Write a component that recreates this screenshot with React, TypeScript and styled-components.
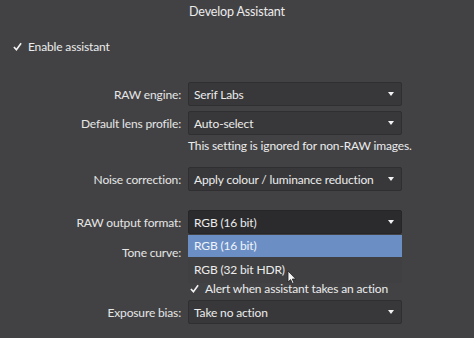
import styled, { createGlobalStyle } from 'styled-components'

const Global = createGlobalStyle`
  html, body {
    margin: 0;
    padding: 0;
    background: #424244;
  }
  body {
    font-family: Lato, 'Noto Sans', sans-serif;
    font-size: 12px;
    letter-spacing: -0.15px;
    color: #e6e6e6;
  }
`

const Panel = styled.div`
  position: relative;
  width: 474px;
  height: 338px;
  overflow: hidden;
  background: #424244;
`

const Title = styled.div`
  height: 24px;
  line-height: 24px;
  text-align: center;
  font-size: 12.5px;
  color: #ececec;
`

const Check = styled.div<{ $top: number; $left: number }>`
  display: flex;
  align-items: center;
  gap: 6px;
  height: 16px;
  margin-top: ${(p) => p.$top}px;
  padding-left: ${(p) => p.$left}px;
  color: #ececec;

  & svg {
    width: 9px;
    height: 9px;
  }
`

const Row = styled.div<{ $top: number }>`
  display: grid;
  grid-template-columns: 181px 214px;
  column-gap: 7px;
  align-items: center;
  margin-top: ${(p) => p.$top}px;
`

const Label = styled.div`
  text-align: right;
  white-space: nowrap;
`

const Select = styled.div<{ $open?: boolean }>`
  position: relative;
  display: flex;
  align-items: center;
  justify-content: space-between;
  box-sizing: border-box;
  height: 24px;
  padding: 0 5px 0 5px;
  border: 1px solid ${(p) => (p.$open ? '#262628' : '#2f2f31')};
  border-radius: 2px;
  background: ${(p) => (p.$open ? '#2b2b2d' : '#38383a')};
  color: #ececec;
  white-space: nowrap;

  &::after {
    content: '';
    width: 0;
    height: 0;
    margin-left: auto;
    margin-right: 2px;
    border-left: 3.5px solid transparent;
    border-right: 3.5px solid transparent;
    border-top: 4px solid #f2f2f2;
  }
`

const Note = styled.div`
  grid-column: 2;
  height: 17px;
  line-height: 17px;
  margin-top: 2px;
  white-space: nowrap;
  color: #ececec;
`

const Popup = styled.div`
  position: absolute;
  top: 24px;
  left: -1px;
  right: -1px;
  z-index: 2;
  background: #404042;
  padding-bottom: 2px;
`

const Option = styled.div<{ $active?: boolean }>`
  height: 22px;
  line-height: 22px;
  padding-left: 6px;
  margin-bottom: ${(p) => (p.$active ? 2 : 0)}px;
  background: ${(p) => (p.$active ? '#6b8fc5' : 'transparent')};
  color: ${(p) => (p.$active ? '#f0f4fa' : '#ececec')};
`

const Cursor = styled.svg`
  position: absolute;
  left: 287px;
  top: 270px;
  width: 10px;
  height: 15px;
  z-index: 3;
`

const Tick = () => (
  <svg viewBox="0 0 10 10">
    <path d="M1 5.5 L3.8 8.5 L9 1.5" fill="none" stroke="#f2f2f2" strokeWidth="1.8" />
  </svg>
)

export default function App() {
  return (
    <Panel>
      <Global />
      <Title>Develop Assistant</Title>
      <Check $top={14} $left={13}>
        <Tick />
        Enable assistant
      </Check>

      <Row $top={28}>
        <Label>RAW engine:</Label>
        <Select>Serif Labs</Select>
      </Row>
      <Row $top={5}>
        <Label>Default lens profile:</Label>
        <Select>Auto-select</Select>
        <Note>This setting is ignored for non-RAW images.</Note>
      </Row>
      <Row $top={13}>
        <Label>Noise correction:</Label>
        <Select>Apply colour / luminance reduction</Select>
      </Row>
      <Row $top={19}>
        <Label>RAW output format:</Label>
        <Select $open>
          RGB (16 bit)
          <Popup>
            <Option $active>RGB (16 bit)</Option>
            <Option>RGB (32 bit HDR)</Option>
          </Popup>
        </Select>
      </Row>
      <Row $top={6}>
        <Label>Tone curve:</Label>
        {/* covered by the open list above */}
        <Select />
      </Row>
      <Check $top={16} $left={190}>
        <Tick />
        Alert when assistant takes an action
      </Check>
      <Row $top={4}>
        <Label>Exposure bias:</Label>
        <Select>Take no action</Select>
      </Row>

      <Cursor viewBox="0 0 10 15">
        <path d="M1 1 L1 12 L3.6 9.6 L5.4 13.6 L7 12.9 L5.3 9 L8.8 9 Z" fill="#f4f4f4" stroke="#222" strokeWidth="0.8" />
      </Cursor>
    </Panel>
  )
}
